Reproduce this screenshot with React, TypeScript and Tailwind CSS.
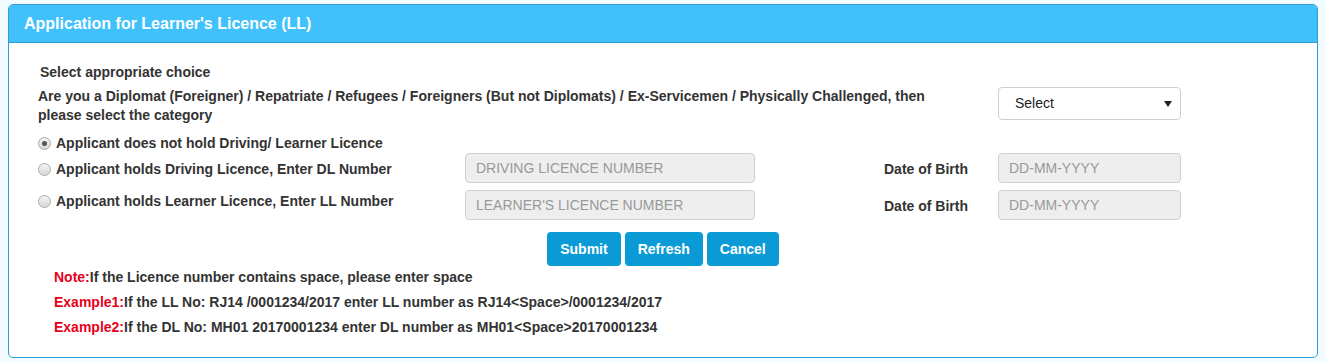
type RadioProps = {
    checked?: boolean
}

const Radio = ({ checked }: RadioProps) => (
    <span className="inline-flex h-[13px] w-[13px] shrink-0 items-center justify-center rounded-full border border-[#a9a9a9] bg-gradient-to-b from-[#f4f4f4] to-[#d8d8d8]">
        {checked && <span className="h-[5px] w-[5px] rounded-full bg-[#555]" />}
    </span>
)

const TextBox = ({ placeholder, width }: { placeholder: string; width: string }) => (
    <div
        className={`${width} flex h-[30px] items-center rounded-[4px] border border-[#cfcfcf] bg-[#eeeeee] px-[10px] text-[14px] text-[#999]`}
    >
        {placeholder}
    </div>
)

const Notes = [
    { tag: 'Note:', text: 'If the Licence number contains space, please enter space' },
    { tag: 'Example1:', text: 'If the LL No: RJ14 /0001234/2017 enter LL number as RJ14<Space>/0001234/2017' },
    { tag: 'Example2:', text: 'If the DL No: MH01 20170001234 enter DL number as MH01<Space>20170001234' },
]

export default function App() {
    return (
        <div className="h-[362px] w-[1326px] bg-[#f2fbff] px-[8px] pt-[4px] font-['Liberation_Sans',Arial,sans-serif] text-[#333]">
            <div className="h-[354px] overflow-hidden rounded-[5px] border border-[#2f9fd3] bg-white">
                <div className="flex h-[38px] items-center border-b border-[#2f9fd3] bg-[#40c1fc] pl-[15px] text-[16px] font-bold text-white">
                    Application for Learner's Licence (LL)
                </div>

                <div className="pl-[29px] pt-[20px]">
                    <div className="pl-[2px] text-[14px] font-bold leading-[18px]">
                        Select appropriate choice
                    </div>

                    <div className="mt-[6px] flex items-start">
                        <div className="w-[900px] text-[14px] font-bold leading-[19px]">
                            Are you a Diplomat (Foreigner) / Repatriate / Refugees / Foreigners (But not Diplomats) / Ex-Servicemen / Physically Challenged, then please select the category
                        </div>
                        <div className="ml-[60px] flex h-[33px] w-[183px] items-center justify-between rounded-[4px] border border-[#cfcfcf] bg-white pl-[16px] pr-[8px] text-[14px] text-[#222]">
                            <span>Select</span>
                            <svg width="8" height="6" viewBox="0 0 8 6">
                                <path d="M0 0 L8 0 L4 6 Z" fill="#222" />
                            </svg>
                        </div>
                    </div>

                    <div className="mt-[9px] flex h-[19px] items-center gap-[5px] text-[14px] font-bold">
                        <Radio checked />
                        <span>Applicant does not hold Driving/ Learner Licence</span>
                    </div>

                    <div className="flex items-center">
                        <div className="flex w-[427px] items-center gap-[5px] pt-[3px] text-[14px] font-bold">
                            <Radio />
                            <span>Applicant holds Driving Licence, Enter DL Number</span>
                        </div>
                        <TextBox placeholder="DRIVING LICENCE NUMBER" width="w-[290px]" />
                        <div className="w-[243px] pt-[3px] pr-[30px] text-right text-[14px] font-bold">
                            Date of Birth
                        </div>
                        <TextBox placeholder="DD-MM-YYYY" width="w-[183px]" />
                    </div>

                    <div className="mt-[7px] flex items-center">
                        <div className="flex w-[427px] items-center gap-[5px] pb-[7px] text-[14px] font-bold">
                            <Radio />
                            <span>Applicant holds Learner Licence, Enter LL Number</span>
                        </div>
                        <TextBox placeholder="LEARNER'S LICENCE NUMBER" width="w-[290px]" />
                        <div className="w-[243px] pt-[3px] pr-[30px] text-right text-[14px] font-bold">
                            Date of Birth
                        </div>
                        <TextBox placeholder="DD-MM-YYYY" width="w-[183px]" />
                    </div>

                    <div className="mt-[12px] flex justify-center gap-[4px] pr-[29px]">
                        {['Submit', 'Refresh', 'Cancel'].map((label) => (
                            <button
                                key={label}
                                className="h-[34px] rounded-[4px] bg-[#0a9bd6] px-[13px] text-[14px] font-bold text-white"
                            >
                                {label}
                            </button>
                        ))}
                    </div>

                    <div className="mt-[1px] pl-[16px] text-[14px] font-bold">
                        {Notes.map((n, i) => (
                            <div key={i} className={i === 0 ? 'leading-[20px]' : 'mt-[5px] leading-[20px]'}>
                                <span className="text-[#e8001a]">{n.tag}</span>
                                {n.text}
                            </div>
                        ))}
                    </div>
                </div>
            </div>
        </div>
    )
}
